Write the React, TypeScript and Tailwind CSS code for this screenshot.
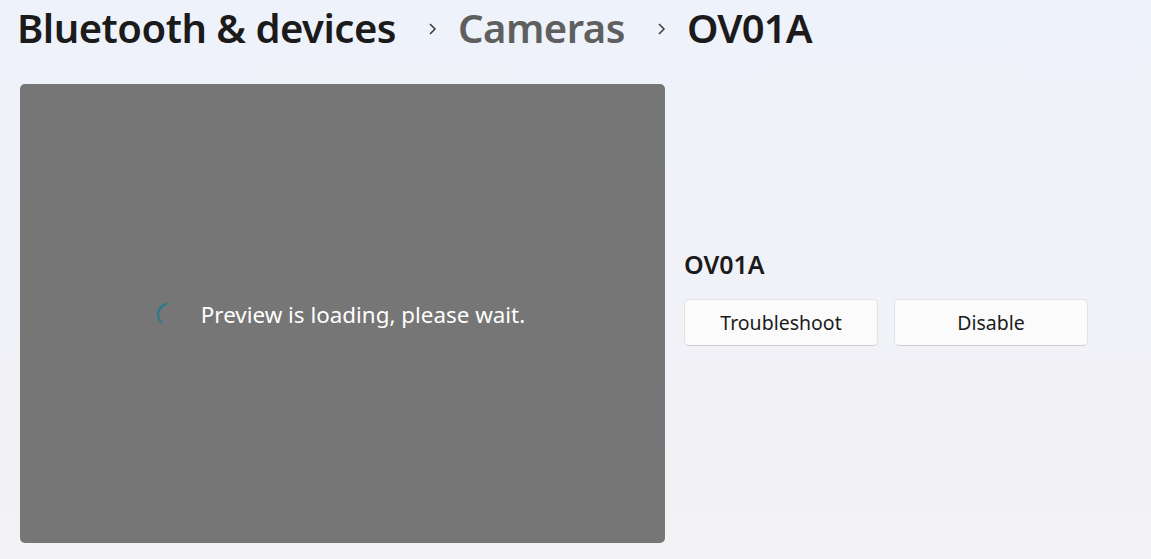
export default function App() {
  return (
    <div
      className="w-[1151px] h-[559px] overflow-hidden bg-gradient-to-b from-[#eef2fa] to-[#f3f2f5] text-[#1b1b1b]"
      style={{ fontFamily: '"Noto Sans", "Open Sans", sans-serif' }}
    >
      {/* breadcrumb header */}
      <div className="flex items-center h-[56px] pl-[17px]">
        <h1 className="text-[40px] font-semibold leading-none tracking-[-0.5px]">Bluetooth &amp; devices</h1>
        <Chevron />
        <span className="text-[40px] font-semibold leading-none tracking-[-0.5px] text-[#5f5f5f]">Cameras</span>
        <Chevron />
        <span className="text-[40px] font-semibold leading-none tracking-[-0.8px]">OV01A</span>
      </div>

      <div className="flex pl-[20px] pt-[28px] gap-[19px]">
        <div className="w-[645px] h-[459px] rounded-[5px] bg-[#767676] flex items-center justify-center">
          <div className="flex items-center gap-[32px] -ml-[5px] mt-[2px]">
            <svg width="14" height="24" viewBox="0 0 14 24">
              <path d="M11 2 A11 11 0 0 0 6 20" stroke="#2b7a8a" strokeWidth="2.4" fill="none" strokeLinecap="round" />
            </svg>
            <span className="text-white text-[22.4px]">Preview is loading, please wait.</span>
          </div>
        </div>

        <div className="flex flex-col pt-[168px]">
          <div className="text-[25px] font-semibold leading-none mb-[22px]">OV01A</div>
          <div className="flex gap-[16px]">
            <button className="w-[194px] h-[47px] rounded-[5px] bg-[#fbfbfc] border border-[#e3e3e3] border-b-[#cdcdcd] text-[19.5px] text-[#1b1b1b]">
              Troubleshoot
            </button>
            <button className="w-[194px] h-[47px] rounded-[5px] bg-[#fbfbfc] border border-[#e3e3e3] border-b-[#cdcdcd] text-[19.5px] text-[#1b1b1b]">
              Disable
            </button>
          </div>
        </div>
      </div>
    </div>
  );
}

function Chevron() {
  return (
    <svg className="ml-[31px] mr-[21px] mt-[2px]" width="10" height="14" viewBox="0 0 10 14">
      <path d="M3 2 L8 7 L3 12" stroke="#3a3a3a" strokeWidth="1.5" fill="none" />
    </svg>
  );
}
